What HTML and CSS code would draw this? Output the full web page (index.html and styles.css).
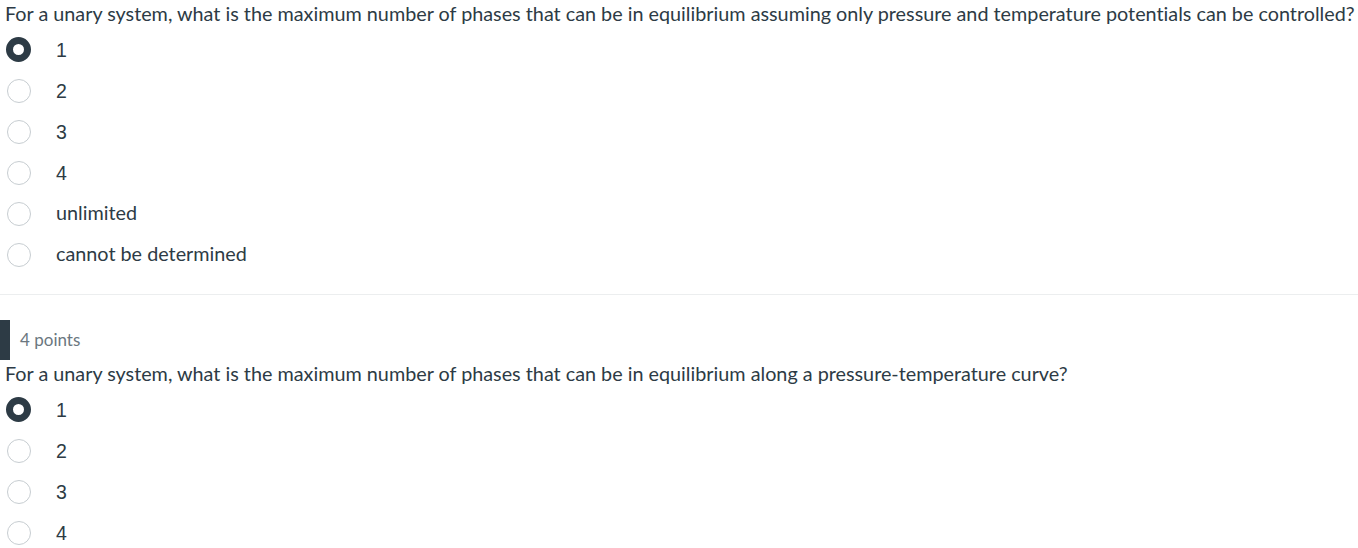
FILE: index.html
```html
<!DOCTYPE html>
<html>
<head>
<meta charset="utf-8">
<link rel="stylesheet" href="styles.css">
</head>
<body>
<div class="quiz">
  <section class="question">
    <div class="q-text">For a unary system, what is the maximum number of phases that can be in equilibrium assuming only pressure and temperature potentials can be controlled?</div>
    <div class="answers">
      <label class="answer"><span class="radio checked"></span><span class="lbl num">1</span></label>
      <label class="answer"><span class="radio"></span><span class="lbl num">2</span></label>
      <label class="answer"><span class="radio"></span><span class="lbl num">3</span></label>
      <label class="answer"><span class="radio"></span><span class="lbl num">4</span></label>
      <label class="answer"><span class="radio"></span><span class="lbl">unlimited</span></label>
      <label class="answer"><span class="radio"></span><span class="lbl">cannot be determined</span></label>
    </div>
  </section>
  <hr class="divider">
  <section class="question q2">
    <div class="points">4 points</div>
    <div class="q-text">For a unary system, what is the maximum number of phases that can be in equilibrium along a pressure-temperature curve?</div>
    <div class="answers">
      <label class="answer"><span class="radio checked"></span><span class="lbl num">1</span></label>
      <label class="answer"><span class="radio"></span><span class="lbl num">2</span></label>
      <label class="answer"><span class="radio"></span><span class="lbl num">3</span></label>
      <label class="answer"><span class="radio"></span><span class="lbl num">4</span></label>
    </div>
  </section>
</div>
</body>
</html>
```
FILE: styles.css
```css
html, body {
  margin: 0;
  padding: 0;
  background: #fff;
}
body {
  font-family: Lato, "Open Sans", sans-serif;
  color: #2d3b45;
  overflow: hidden;
  font-variant-ligatures: none;
}
.quiz {
  width: 1358px;
}
.q-text {
  font-size: 19.8px;
  line-height: 27px;
  padding-bottom: 2px;
  padding-left: 5px;
  white-space: nowrap;
}
.answers {
  display: flex;
  flex-direction: column;
}
.answer {
  display: flex;
  align-items: center;
  height: 41px;
}
.radio {
  box-sizing: border-box;
  width: 24px;
  height: 24px;
  margin-left: 7px;
  border-radius: 50%;
  border: 1px solid #c7cdd1;
  background: #fff;
  flex: none;
}
.radio.checked {
  width: 25px;
  height: 25px;
  margin-left: 6px;
  border: 7px solid #2d3b45;
}
.lbl {
  margin-left: 25px;
  font-size: 19.8px;
  padding-bottom: 3px;
}
.num {
  font-family: "Liberation Sans", Arial, sans-serif;
  font-size: 19.5px;
  padding-bottom: 0;
  padding-top: 1px;
}
.divider {
  border: 0;
  border-top: 1px solid #eceeef;
  margin: 19px 0 25px;
}
.points {
  height: 40px;
  display: flex;
  align-items: center;
  border-left: 10px solid #2d3b45;
  padding-left: 10px;
  padding-bottom: 2px;
  box-sizing: border-box;
  font-size: 17px;
  color: #6b7780;
}
```
